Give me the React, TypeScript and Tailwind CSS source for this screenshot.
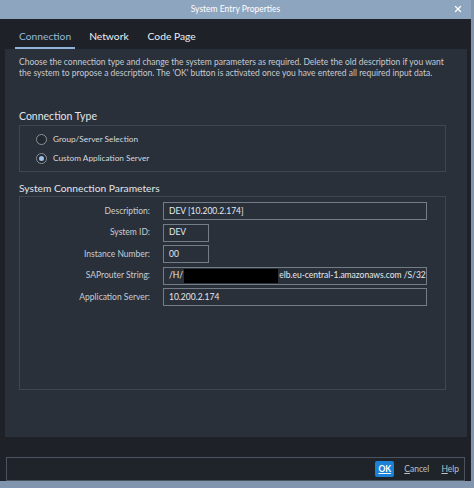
import { X } from "lucide-react";

const font = { fontFamily: "Lato, 'Open Sans', sans-serif" };

function Radio({ checked, label }: { checked?: boolean; label: string }) {
  return (
    <div className="flex h-[19px] items-center gap-[6px] pl-[16px]">
      <span className="flex h-[11px] w-[11px] items-center justify-center rounded-full border border-[#8a929c] bg-[#232830]">
        {checked ? <span className="h-[5px] w-[5px] rounded-full bg-[#9cc3ea]" /> : null}
      </span>
      <span className="text-[8.25px] text-[#d5d9de]">{label}</span>
    </div>
  );
}

function Field({ label, width, children }: { label: string; width: string; children: React.ReactNode }) {
  return (
    <div className="flex h-[18px] items-center">
      <span className="w-[143px] pr-[13px] text-right text-[8.5px] text-[#c9cdd3]">{label}</span>
      <div className={`flex h-[18px] items-center overflow-hidden whitespace-nowrap border border-[#747c86] px-[5px] text-[8.5px] text-[#e6e9ec] ${width}`}>
        {children}
      </div>
    </div>
  );
}

export default function App() {
  return (
    <div className="h-[488px] w-[474px] overflow-hidden bg-[#8196ae]" style={font}>
      <div className="flex h-[481px] w-[471px] flex-col bg-[#1e2228]">
        <div className="relative flex h-[19px] items-center justify-center bg-[#8ea5c0]">
          <span className="text-[8.5px] text-white">System Entry Properties</span>
          <X className="absolute right-[8px] top-[4px] h-[10px] w-[10px] text-white" strokeWidth={3} />
        </div>

        <div className="flex h-[30px] items-end pl-[15px] text-[10.25px]">
          <div className="border-b-2 border-[#8fb3d9] px-[4px] pb-[3px] text-[#95b9dc]">Connection</div>
          <div className="ml-[14px] pb-[5px] text-[#eceef1]">Network</div>
          <div className="ml-[19px] pb-[5px] text-[#eceef1]">Code Page</div>
        </div>

        <div className="ml-[5px] flex h-[388px] w-[462px] flex-col bg-[#29303a] px-[14px] pt-[8px]">
          <p className="w-[430px] text-[8.5px] leading-[11px] text-[#c5cad1]">
            Choose the connection type and change the system parameters as required. Delete the old description if you want
            the system to propose a description. The 'OK' button is activated once you have entered all required input data.
          </p>

          <div className="mt-[30px] text-[10.5px] leading-[14px] text-[#e1e5ea]">Connection Type</div>
          <div className="mt-[2px] flex h-[47px] w-[427px] flex-col justify-center border border-[#3e4651]">
            <Radio label="Group/Server Selection" />
            <Radio checked label="Custom Application Server" />
          </div>

          <div className="mt-[9px] text-[10.25px] leading-[14px] text-[#e1e5ea]">System Connection Parameters</div>
          <div className="mt-[1px] flex h-[194px] w-[427px] flex-col gap-[3.5px] border border-[#3e4651] pt-[5px]">
            <Field label="Description:" width="w-[264px]">DEV [10.200.2.174]</Field>
            <Field label="System ID:" width="w-[46px]">DEV</Field>
            <Field label="Instance Number:" width="w-[46px]">00</Field>
            <Field label="SAProuter String:" width="w-[264px]">
              /H/
              <span className="mx-[1px] inline-block h-[14px] w-[94px] shrink-0 bg-black" />
              elb.eu-central-1.amazonaws.com /S/329
            </Field>
            <Field label="Application Server:" width="w-[264px]">10.200.2.174</Field>
          </div>
        </div>

        <div className="mx-[6px] mt-[20px] flex h-[24px] items-center justify-end gap-[10px] border border-[#4a535e] bg-[#1f242b] pr-[5px] text-[8.5px]">
          <span className="flex h-[16px] w-[19px] items-center justify-center rounded-[2px] bg-[#1b82d8] font-bold text-white underline">OK</span>
          <span className="text-[#b9c0c8]"><span className="underline">C</span>ancel</span>
          <span className="ml-[2px] text-[#b9c0c8]"><span className="underline">H</span>elp</span>
        </div>
      </div>
    </div>
  );
}
